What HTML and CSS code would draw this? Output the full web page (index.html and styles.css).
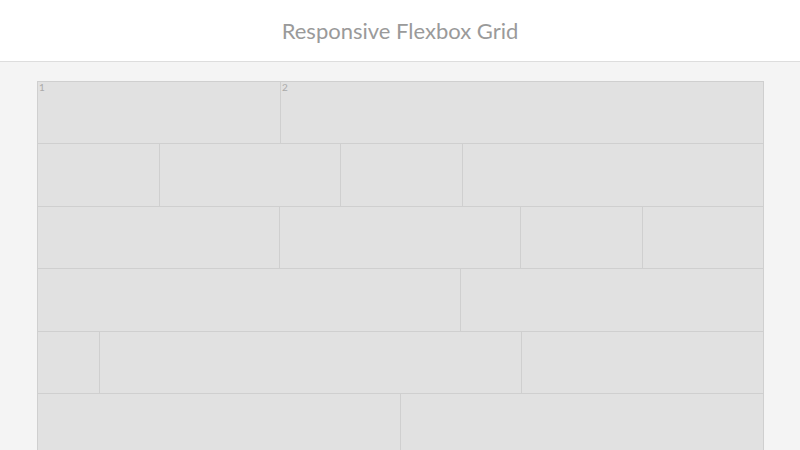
FILE: index.html
```html
<!DOCTYPE html>
<html lang="en">
<head>
  <meta charset="UTF-8">
  <title>Responsive Flexbox Grid</title>
  <link rel="stylesheet" href="styles.css">
</head>
<body>
  <header class="top">
    <h1>Responsive Flexbox Grid</h1>
  </header>
  <main class="grid">
    <div class="row">
      <div class="col col-4">1</div>
      <div class="col col-8">2</div>
    </div>
    <div class="row">
      <div class="col col-2"></div>
      <div class="col col-3"></div>
      <div class="col col-2"></div>
      <div class="col col-5"></div>
    </div>
    <div class="row">
      <div class="col col-4"></div>
      <div class="col col-4"></div>
      <div class="col col-2"></div>
      <div class="col col-2"></div>
    </div>
    <div class="row">
      <div class="col col-7"></div>
      <div class="col col-5"></div>
    </div>
    <div class="row">
      <div class="col col-1"></div>
      <div class="col col-7"></div>
      <div class="col col-4"></div>
    </div>
    <div class="row">
      <div class="col col-6"></div>
      <div class="col col-6"></div>
    </div>
  </main>
</body>
</html>
```

FILE: styles.css
```css
* {
  box-sizing: border-box;
}
body {
  margin: 0;
  background: #f4f4f4;
  font-family: Lato, sans-serif;
}
.top {
  height: 62px;
  background: #fff;
  border-bottom: 1px solid #ddd;
  display: flex;
  align-items: center;
  justify-content: center;
}
.top h1 {
  margin: 0;
  font-size: 22px;
  font-weight: 400;
  color: #9a9a9a;
}
.grid {
  margin: 19px 36px 0 37px;
  border-top: 1px solid #cfcfcf;
  border-left: 1px solid #cfcfcf;
}
.row {
  display: flex;
}
.col {
  height: 62.4px;
  background: #e1e1e1;
  border-right: 1px solid #cfcfcf;
  border-bottom: 1px solid #cfcfcf;
  font-size: 10px;
  line-height: 11px;
  color: #aaa;
  padding: 0 1px;
}
/* 12 column spans, the leftover space is shared out evenly */
.col-1 { flex: 1 1 calc((100% - 6px) / 12 + 1px); }
.col-2 { flex: 1 1 calc((100% - 6px) / 12 * 2 + 1px); }
.col-3 { flex: 1 1 calc((100% - 6px) / 12 * 3 + 1px); }
.col-4 { flex: 1 1 calc((100% - 6px) / 12 * 4 + 1px); }
.col-5 { flex: 1 1 calc((100% - 6px) / 12 * 5 + 1px); }
.col-6 { flex: 1 1 calc((100% - 6px) / 12 * 6 + 1px); }
.col-7 { flex: 1 1 calc((100% - 6px) / 12 * 7 + 1px); }
.col-8 { flex: 1 1 calc((100% - 6px) / 12 * 8 + 1px); }
```
